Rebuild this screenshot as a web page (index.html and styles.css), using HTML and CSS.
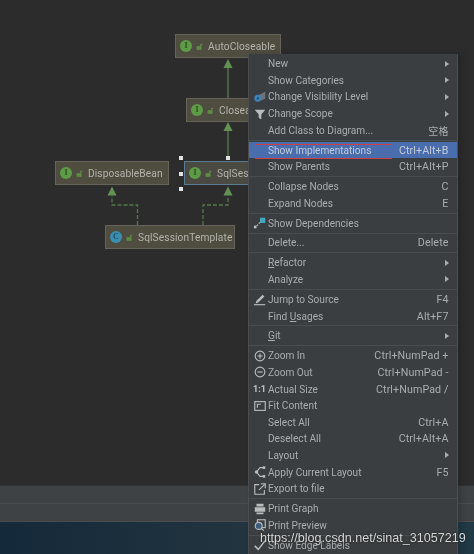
FILE: index.html
```html
<!DOCTYPE html>
<html lang="en">
<head>
<meta charset="utf-8">
<title>Diagram context menu</title>
<link rel="stylesheet" href="styles.css">
</head>
<body>
<div class="window">
  <main class="canvas">
    <svg class="edges" width="474" height="486" viewBox="0 0 474 486">
      <g class="solid">
        <path d="M228 68V98"/>
        <path d="M228 131V160"/>
      </g>
      <g class="dashed">
        <path d="M137.500 225V205H112V196"/>
        <path d="M203 225V205H228V196"/>
      </g>
      <g class="heads">
        <path d="M228 59l4.500 9h-9z"/>
        <path d="M228 122l4.500 9h-9z"/>
        <path d="M112 186.500l4.500 9h-9z"/>
        <path d="M228 186.500l4.500 9h-9z"/>
      </g>
    </svg>

    <div class="node node-auto"><span class="badge badge-i">I</span><svg class="lock" viewBox="0 0 8 8"><path d="M1 4h5v3.500H1zM5 4V2a1 1 0 0 1 2 0"/></svg><span class="node-name">AutoCloseable</span></div>
    <div class="node node-close"><span class="badge badge-i">I</span><svg class="lock" viewBox="0 0 8 8"><path d="M1 4h5v3.500H1zM5 4V2a1 1 0 0 1 2 0"/></svg><span class="node-name">Closeable</span></div>
    <div class="node node-session selected"><span class="badge badge-i">I</span><svg class="lock" viewBox="0 0 8 8"><path d="M1 4h5v3.500H1zM5 4V2a1 1 0 0 1 2 0"/></svg><span class="node-name">SqlSession</span></div>
    <div class="node node-disposable"><span class="badge badge-i">I</span><svg class="lock" viewBox="0 0 8 8"><path d="M1 4h5v3.500H1zM5 4V2a1 1 0 0 1 2 0"/></svg><span class="node-name">DisposableBean</span></div>
    <div class="node node-template"><span class="badge badge-c">C</span><svg class="lock" viewBox="0 0 8 8"><path d="M1 4h5v3.500H1zM5 4V2a1 1 0 0 1 2 0"/></svg><span class="node-name">SqlSessionTemplate</span></div>

    <span class="handle h1"></span>
    <span class="handle h2"></span>
    <span class="handle h3"></span>
    <span class="handle h4"></span>
  </main>

  <div class="toolbar"></div>
  <div class="toolbar"></div>
  <div class="desktop"></div>

  <nav class="menu">
    <div class="item"><span class="icon"></span><span class="label">New</span><span class="arrow"></span></div>
    <div class="item"><span class="icon"></span><span class="label">Show Categories</span><span class="arrow"></span></div>
    <div class="item"><span class="icon"><svg viewBox="0 0 16 16"><path class="i-grey" d="M6 6l8-4v8l-5 2z"/><circle class="i-blue" cx="5.500" cy="9.500" r="4"/><circle class="i-dark" cx="5.500" cy="9.500" r="1.300"/></svg></span><span class="label">Change Visibility Level</span><span class="arrow"></span></div>
    <div class="item"><span class="icon"><svg viewBox="0 0 16 16"><path class="i-light" d="M2 3h12L9.500 8.500V14l-3-1.500v-4z"/></svg></span><span class="label">Change Scope</span><span class="arrow"></span></div>
    <div class="item"><span class="icon"></span><span class="label">Add Class to Diagram...</span><span class="keys cjk">空格</span></div>
    <div class="sep"></div>
    <div class="item active"><span class="icon"></span><span class="label">Show Implementations</span><span class="keys">Ctrl+Alt+B</span><span class="callout"></span></div>
    <div class="item"><span class="icon"></span><span class="label">Show Parents</span><span class="keys">Ctrl+Alt+P</span></div>
    <div class="sep"></div>
    <div class="item"><span class="icon"></span><span class="label">Collapse Nodes</span><span class="keys">C</span></div>
    <div class="item"><span class="icon"></span><span class="label">Expand Nodes</span><span class="keys">E</span></div>
    <div class="sep"></div>
    <div class="item"><span class="icon"><svg viewBox="0 0 16 16"><rect class="i-cyan" x="8" y="2" width="6" height="6"/><path class="i-stroke i-dash" d="M2 14L9 6"/><rect class="i-light" x="1" y="11" width="3" height="3"/></svg></span><span class="label">Show Dependencies</span></div>
    <div class="sep"></div>
    <div class="item"><span class="icon"></span><span class="label">Delete...</span><span class="keys">Delete</span></div>
    <div class="sep"></div>
    <div class="item"><span class="icon"></span><span class="label"><u>R</u>efactor</span><span class="arrow"></span></div>
    <div class="item"><span class="icon"></span><span class="label">Analyze</span><span class="arrow"></span></div>
    <div class="sep"></div>
    <div class="item"><span class="icon"><svg viewBox="0 0 16 16"><path class="i-light" d="M4 10l7-7 2 2-7 7-3 1z"/><path class="i-stroke" d="M1 14.500h13"/></svg></span><span class="label">Jump to Source</span><span class="keys">F4</span></div>
    <div class="item"><span class="icon"></span><span class="label">Find <u>U</u>sages</span><span class="keys">Alt+F7</span></div>
    <div class="sep"></div>
    <div class="item"><span class="icon"></span><span class="label"><u>G</u>it</span><span class="arrow"></span></div>
    <div class="sep"></div>
    <div class="item"><span class="icon"><svg viewBox="0 0 16 16"><circle class="i-stroke" cx="8" cy="8" r="5.500"/><path class="i-stroke" d="M5 8h6M8 5v6"/></svg></span><span class="label">Zoom In</span><span class="keys">Ctrl+NumPad +</span></div>
    <div class="item"><span class="icon"><svg viewBox="0 0 16 16"><circle class="i-stroke" cx="8" cy="8" r="5.500"/><path class="i-stroke" d="M5 8h6"/></svg></span><span class="label">Zoom Out</span><span class="keys">Ctrl+NumPad -</span></div>
    <div class="item"><span class="icon"><span class="ratio">1:1</span></span><span class="label">Actual Size</span><span class="keys">Ctrl+NumPad /</span></div>
    <div class="item"><span class="icon"><svg viewBox="0 0 16 16"><rect class="i-stroke" x="2" y="3" width="12" height="10"/><path class="i-stroke" d="M5 10V6h4"/></svg></span><span class="label">Fit Content</span></div>
    <div class="item"><span class="icon"></span><span class="label">Select All</span><span class="keys">Ctrl+A</span></div>
    <div class="item"><span class="icon"></span><span class="label">Deselect All</span><span class="keys">Ctrl+Alt+A</span></div>
    <div class="item"><span class="icon"></span><span class="label">Layout</span><span class="arrow"></span></div>
    <div class="item"><span class="icon"><svg viewBox="0 0 16 16"><path class="i-stroke" d="M13 3H8L4 8l4 5h5"/><circle class="i-light" cx="4" cy="8" r="2"/><rect class="i-light" x="11" y="1.500" width="3" height="3"/><rect class="i-light" x="11" y="11.500" width="3" height="3"/></svg></span><span class="label">Apply Current Layout</span><span class="keys">F5</span></div>
    <div class="item"><span class="icon"><svg viewBox="0 0 16 16"><path class="i-stroke" d="M7 3H2v11h11V9M7 9l6-6M9 2h5v5"/></svg></span><span class="label">Export to file</span></div>
    <div class="sep"></div>
    <div class="item"><span class="icon"><svg viewBox="0 0 16 16"><path class="i-light" d="M4 2h8v3H4zM2 6h12v5H2zM4 12h8v2H4z"/></svg></span><span class="label">Print Graph</span></div>
    <div class="item"><span class="icon"><svg viewBox="0 0 16 16"><rect class="i-stroke" x="5" y="2" width="9" height="9"/><circle class="i-stroke i-fill" cx="6.500" cy="9" r="4"/><path class="i-stroke" d="M9.500 12l3 2.500"/></svg></span><span class="label">Print Preview</span></div>
    <div class="sep"></div>
    <div class="item"><span class="icon"><svg viewBox="0 0 16 16"><path class="i-check" d="M2 9l4 4 8-10"/></svg></span><span class="label">Show Edge Labels</span></div>
  </nav>

  <span class="watermark">https://blog.csdn.net/sinat_31057219</span>
</div>
</body>
</html>
```
FILE: styles.css
```css
* {
  box-sizing: border-box;
}

html,
body {
  margin: 0;
  height: 100%;
  background: #2b2b2b;
}

.window {
  position: relative;
  width: 474px;
  height: 554px;
  overflow: hidden;
  display: flex;
  flex-direction: column;
  font-family: Roboto, "Noto Sans", sans-serif;
  filter: blur(0.35px);
}

.canvas {
  position: relative;
  height: 486px;
  flex: none;
  background: #2c2c2c;
  border-bottom: 1px solid #333;
}

.edges {
  position: absolute;
  left: 0;
  top: 0;
}

.solid path {
  fill: none;
  stroke: #5c7c4e;
  stroke-width: 1.300;
}

.dashed path {
  fill: none;
  stroke: #55774a;
  stroke-width: 1.300;
  stroke-dasharray: 4 2;
}

.heads path {
  fill: #639153;
}

.node {
  position: absolute;
  height: 24px;
  display: flex;
  align-items: center;
  padding-left: 4px;
  background: #4f4c40;
  border: 1px solid #65635a;
  color: #b4b4ac;
  font-size: 10.200px;
  letter-spacing: 0.1px;
  white-space: nowrap;
  overflow: hidden;
}

.node-auto { left: 175px; top: 34px; width: 106px; }
.node-close { left: 186px; top: 98px; width: 66px; }
.node-session { left: 184px; top: 161px; width: 66px; }
.node-disposable { left: 55px; top: 161px; width: 114px; }
.node-template { left: 105px; top: 225px; width: 130px; }

.selected {
  border-color: #5b7b93;
  background: #4a4a42;
}

.badge {
  flex: none;
  width: 12px;
  height: 12px;
  border-radius: 50%;
  color: #2e4a24;
  font: bold 8px/12px "Liberation Serif", serif;
  text-align: center;
}

.badge-i { background: #5d9b47; }
.badge-c { background: #3b8fb0; color: #214a5c; }

.lock {
  flex: none;
  width: 7px;
  height: 7px;
  margin-left: 4px;
  margin-right: 5px;
  fill: #5f8a45;
  stroke: #5f8a45;
  stroke-width: 0.800;
}

.handle {
  position: absolute;
  width: 4px;
  height: 4px;
  background: #e4e4e4;
}

.h1 { left: 179px; top: 156px; }
.h2 { left: 226px; top: 156px; }
.h3 { left: 179px; top: 172px; }
.h4 { left: 179px; top: 187px; }

.toolbar {
  height: 18px;
  flex: none;
  background: #3f4244;
  border-bottom: 1px solid #4a4c4d;
}

.desktop {
  flex: 1;
  background: linear-gradient(90deg, #14293a, #253640 60%, #203945);
}

.menu {
  position: absolute;
  left: 248px;
  top: 54px;
  width: 209.500px;
  height: 510px;
  padding-top: 1.400px;
  background: #3b3e40;
  border: 1px solid #4b4d4f;
  border-width: 0 1px 0 1px;
  color: #a9adae;
  font-size: 10.700px;
  letter-spacing: 0.1px;
  box-shadow: 4px 0 6px rgba(0, 0, 0, 0.15);
}

.item {
  position: relative;
  height: 16.620px;
  display: flex;
  align-items: center;
  padding-right: 8px;
  white-space: nowrap;
}

.item u {
  text-underline-offset: 1px;
}

.icon {
  flex: none;
  width: 19px;
  height: 16px;
  display: flex;
  align-items: center;
  justify-content: center;
  padding-left: 2px;
}

.icon svg {
  width: 14px;
  height: 14px;
}

.ratio {
  font-size: 9px;
  font-weight: 700;
  color: #c0c3c4;
}

.label {
  flex: 1;
  font-size: 10.100px;
  letter-spacing: 0;
}

.keys {
  color: #a9adae;
}

.cjk {
  font-family: "Noto Sans CJK SC", sans-serif;
  font-size: 10px;
}

.arrow {
  width: 0;
  height: 0;
  border-left: 4px solid #a9adae;
  border-top: 3.500px solid transparent;
  border-bottom: 3.500px solid transparent;
}

.active {
  background: #4a6ead;
  color: #c4cbd8;
}

.active .keys {
  color: #c4cbd8;
}

.callout {
  position: absolute;
  left: 6px;
  top: 2px;
  width: 137px;
  height: 15.500px;
  border: 1.400px solid #cf3f48;
}

.sep {
  height: 3.300px;
  display: flex;
  align-items: center;
}

.sep::after {
  content: "";
  flex: 1;
  height: 1px;
  background: #4a4d4f;
}

.i-grey { fill: #6d7378; }
.i-blue { fill: #3b84b8; }
.i-dark { fill: #2b3f4e; }
.i-cyan { fill: #45a6c4; }
.i-light { fill: #b9bcbd; }

.i-stroke {
  fill: none;
  stroke: #b9bcbd;
  stroke-width: 1.300;
}

.i-dash { stroke-dasharray: 2 1.500; }
.i-fill { fill: #3b5c78; }

.i-check {
  fill: none;
  stroke: #b9bcbd;
  stroke-width: 1.800;
}

.watermark {
  position: absolute;
  left: 260px;
  top: 530px;
  color: #d6d8d8;
  font: 12.600px/16px "Liberation Sans", sans-serif;
  white-space: nowrap;
  text-shadow: 0 0 2px rgba(0, 0, 0, 0.7);
}
```
